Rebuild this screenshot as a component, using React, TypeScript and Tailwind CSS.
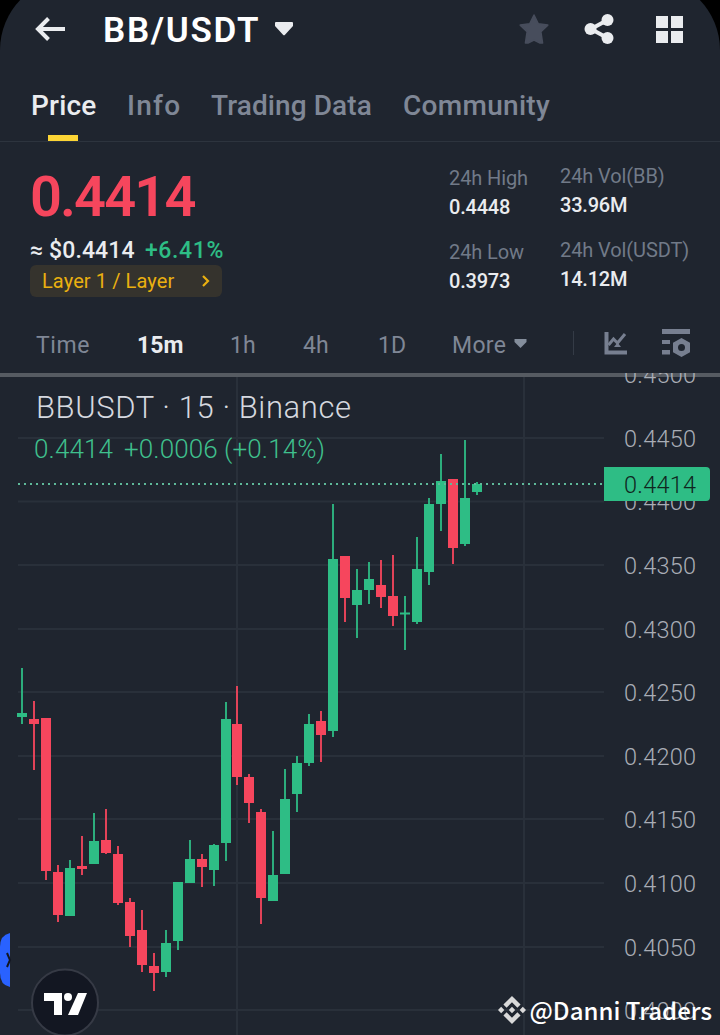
import { SiBinance } from "react-icons/si";

type Candle = {
  x: number;
  high: number;
  top: number;
  bottom: number;
  low: number;
  up: boolean;
};

const UP = "#2ebd85";
const DOWN = "#f6465d";

const c = (
  x: number,
  high: number,
  top: number,
  bottom: number,
  low: number,
  up: boolean
): Candle => ({ x, high, top, bottom, low, up });

const candles: Candle[] = [
  c(22, 668, 713, 717, 724, true),
  c(34, 701, 719, 724, 770, false),
  c(46, 718, 718, 871, 880, false),
  c(58, 865, 872, 915, 922, false),
  c(70, 860, 868, 916, 916, true),
  c(82, 836, 866, 869, 875, false),
  c(94, 813, 841, 864, 864, true),
  c(106, 809, 840, 853, 854, false),
  c(118, 846, 854, 903, 905, false),
  c(130, 898, 902, 936, 947, false),
  c(142, 910, 930, 965, 972, false),
  c(154, 953, 966, 973, 991, false),
  c(166, 930, 943, 972, 977, true),
  c(178, 882, 882, 941, 950, true),
  c(190, 840, 859, 883, 883, true),
  c(202, 854, 859, 867, 887, false),
  c(214, 844, 845, 870, 886, true),
  c(226, 702, 719, 843, 861, true),
  c(237, 686, 724, 777, 785, false),
  c(249, 774, 777, 803, 823, false),
  c(261, 809, 812, 898, 924, false),
  c(273, 831, 875, 901, 901, true),
  c(285, 769, 799, 874, 874, true),
  c(297, 756, 763, 794, 812, true),
  c(309, 714, 724, 763, 766, true),
  c(321, 711, 721, 735, 762, false),
  c(333, 504, 559, 731, 737, true),
  c(345, 556, 556, 598, 622, false),
  c(357, 569, 590, 605, 638, true),
  c(369, 562, 579, 590, 604, true),
  c(381, 560, 585, 597, 608, false),
  c(393, 555, 596, 616, 626, false),
  c(405, 596, 612.5, 614.5, 650, true),
  c(417, 537, 569, 622, 624, true),
  c(429, 498, 504, 572, 585, true),
  c(441, 454, 481, 504, 531, true),
  c(453, 479, 479, 548, 564, false),
  c(465, 440, 498, 544, 546, true),
  c(477, 482, 484, 492, 495, true),
];

const priceLevels = [
  { label: "0.4500", y: 374.5 },
  { label: "0.4450", y: 438 },
  { label: "0.4400", y: 501.5 },
  { label: "0.4350", y: 565 },
  { label: "0.4300", y: 629 },
  { label: "0.4250", y: 692 },
  { label: "0.4200", y: 756 },
  { label: "0.4150", y: 819 },
  { label: "0.4100", y: 883 },
  { label: "0.4050", y: 947 },
  { label: "0.4000", y: 1010 },
];

function Header() {
  return (
    <header className="flex h-[60px] items-center pl-[35px] pr-[37px]">
      <svg width="31" height="26" viewBox="0 0 31 26" className="mb-0.5 shrink-0">
        <path
          d="M30 13H3M13.5 2.5L3 13l10.5 10.5"
          fill="none"
          stroke="#eaecef"
          strokeWidth="4"
        />
      </svg>
      <h1 className="mt-px ml-[37px] w-[155px] whitespace-nowrap text-[35px] leading-none font-semibold tracking-[1.7px] text-white">
        BB/USDT
      </h1>
      <svg width="20" height="16" viewBox="0 0 20 16" className="mb-0.5 ml-4">
        <path
          d="M2 1h16q1.5 0 1 1.800V5L11 13.800q-1 1-2 0L1 5V2.800Q.5 1 2 1z"
          fill="#eaecef"
        />
      </svg>
      <div className="mb-0.5 ml-auto flex items-center">
        <svg width="32" height="32" viewBox="0 0 32 32">
          <path
            d="M16 2l4.300 8.800 9.500 1.300-6.900 6.700 1.700 11.200h-2.600L16 27l-6 3H7.400l1.700-11.200-6.900-6.700 9.500-1.300z"
            fill="#474d5c"
            stroke="#474d5c"
            strokeWidth="1.500"
            strokeLinejoin="round"
          />
        </svg>
        <svg width="30" height="32" viewBox="0 0 30 32" className="ml-[34px]">
          <path
            d="M23.500 7L7 16l16.500 9"
            fill="none"
            stroke="#eaecef"
            strokeWidth="4"
          />
          <g fill="#eaecef">
            <circle cx="6.500" cy="16" r="6" />
            <circle cx="23.500" cy="7" r="6" />
            <circle cx="23.500" cy="25" r="6" />
          </g>
        </svg>
        <div className="ml-[42px] grid grid-cols-2 gap-[3px]">
          <span className="size-3 bg-[#eaecef]" />
          <span className="size-3 bg-[#eaecef]" />
          <span className="size-3 bg-[#eaecef]" />
          <span className="size-3 bg-[#eaecef]" />
        </div>
      </div>
    </header>
  );
}

function Tabs() {
  return (
    <nav className="flex h-[82px] border-b border-[#2d343e] pl-[31px] pt-[26px] text-[28px] leading-10 font-medium whitespace-nowrap text-[#7f8796]">
      <div className="flex w-[96px] flex-col">
        <span className="tracking-[0.2px] text-[#eaecef]">Price</span>
        <span className="mt-[9px] ml-[17px] h-[6px] w-[30px] bg-[#fcd535]" />
      </div>
      <span className="w-[84px] tracking-[1.300px]">Info</span>
      <span className="w-[192px] tracking-[0.1px]">Trading Data</span>
      <span className="tracking-[0.3px]">Community</span>
    </nav>
  );
}

function Stat({ label, value }: { label: string; value: string }) {
  return (
    <div className="h-[74px]">
      <div className="text-[20px] leading-[30px] tracking-[-0.1px] text-[#717a88]">
        {label}
      </div>
      <div className="text-[20px] leading-[28px] font-medium tracking-[-0.2px] text-[#eaecef]">
        {value}
      </div>
    </div>
  );
}

function Summary() {
  return (
    <section className="flex h-[168px] whitespace-nowrap">
      <div className="w-[449px] pl-[30px] pt-[25px]">
        <div className="text-[56px] leading-[60px] font-semibold tracking-[-1.900px] text-[#f6465d]">
          0.4414
        </div>
        <div className="mt-[8px] flex text-[23px] leading-[31px] font-medium">
          <span className="w-[115px] tracking-[0.1px] text-[#eaecef]">
            ≈ $0.4414
          </span>
          <span className="tracking-[0.6px] text-[#2ebd85]">+6.41%</span>
        </div>
        <div className="-mt-px flex h-8 w-[192px] items-center justify-between rounded-md bg-[#35332d] pl-3 pr-[12px] text-[20px] tracking-[0.1px] text-[#eab010]">
          <span>Layer 1 / Layer</span>
          <svg width="8" height="12" viewBox="0 0 8 12">
            <path
              d="M1 1l5 5-5 5"
              fill="none"
              stroke="#eab010"
              strokeWidth="2.200"
            />
          </svg>
        </div>
      </div>
      <div className="w-[111px] pt-[21px]">
        <Stat label="24h High" value="0.4448" />
        <Stat label="24h Low" value="0.3973" />
      </div>
      <div className="pt-[19px]">
        <Stat label="24h Vol(BB)" value="33.96M" />
        <Stat label="24h Vol(USDT)" value="14.12M" />
      </div>
    </section>
  );
}

function Intervals() {
  return (
    <section className="flex h-[63px] items-center pt-[7px] pl-[36px] text-[23px] whitespace-nowrap text-[#7f8796]">
      <span className="mt-[3px] w-[101px] tracking-[0.6px]">Time</span>
      <span className="mt-[3px] w-[93px] font-bold text-[#eaecef]">15m</span>
      <span className="mt-[3px] w-[73px]">1h</span>
      <span className="mt-[3px] w-[75px]">4h</span>
      <span className="mt-[3px] w-[74px]">1D</span>
      <span className="mt-[3px] w-[62px] tracking-[0.3px]">More</span>
      <svg width="13" height="11" viewBox="0 0 13 11" className="mb-1">
        <path d="M.5 1h12v3L6.500 10 .5 4z" fill="#848e9c" />
      </svg>
      <span className="mb-1 ml-[46px] h-6 w-px bg-[#343b46]" />
      <svg width="24" height="24" viewBox="0 0 24 24" className="mb-1 ml-[30px]">
        <g fill="none" stroke="#777f90">
          <path d="M2.500 1v20.500H23" strokeWidth="4" />
          <path d="M4.500 14l5-6 4 4 7.500-9" strokeWidth="3" />
        </g>
        <path d="M10 16l3.500-4.500L17 16z" fill="#777f90" />
      </svg>
      <svg width="28" height="30" viewBox="0 0 28 30" className="mb-1 ml-[34px]">
        <g fill="#777f90">
          <path d="M0 1h28v5H0zM0 12h8v4H0zM0 22h8v4.500H0z" />
          <path
            fillRule="evenodd"
            d="M19.500 10l8.500 4.800v9.400L19.500 29 11 24.200v-9.400zM19.500 16a3.500 3.500 0 1 0 0 7 3.500 3.500 0 0 0 0-7z"
          />
        </g>
      </svg>
    </section>
  );
}

function Chart() {
  // viewBox keeps screen coordinates, so candle values are plain y positions
  return (
    <svg
      width="720"
      height="662"
      viewBox="0 373 720 662"
      className="block font-[Roboto,sans-serif]"
    >
      <g stroke="#29303a" strokeWidth="2">
        {priceLevels.map((p) => (
          <line key={p.label} x1="18" x2="604" y1={p.y} y2={p.y} />
        ))}
        <line x1="237" x2="237" y1="373" y2="1035" />
        <line x1="524" x2="524" y1="373" y2="1035" />
      </g>
      <rect x="0" y="373" width="720" height="4" fill="#565b62" />

      {candles.map((k) => (
        <g key={k.x} fill={k.up ? UP : DOWN}>
          <rect
            x={k.x - 1}
            y={k.high}
            width="2"
            height={k.low - k.high}
            opacity="0.9"
          />
          <rect x={k.x - 5} y={k.top} width="10" height={k.bottom - k.top} />
        </g>
      ))}
      <line
        x1="18"
        x2="604"
        y1="484"
        y2="484"
        stroke="#5fb99a"
        strokeWidth="2"
        strokeDasharray="2 4"
      />

      <g fontSize="23.500" fill="#a9adb6" fontWeight="300">
        {priceLevels.map((p) => (
          <text key={p.label} x="624" y={p.y + 8.500} textLength="72">
            {p.label}
          </text>
        ))}
      </g>
      <path d="M604 467h102q4 0 4 4v26q0 4-4 4H604z" fill={UP} />
      <text
        x="624"
        y="493"
        fontSize="23.500"
        fontWeight="300"
        textLength="72"
        fill="#10271f"
      >
        0.4414
      </text>

      <text
        x="36"
        y="418"
        fontSize="31"
        fontWeight="300"
        textLength="315"
        fill="#d5d8df"
      >
        BBUSDT · 15 · Binance
      </text>
      <g fontSize="26" fontWeight="300" fill="#3fc08d">
        <text x="34" y="458" textLength="79">
          0.4414
        </text>
        <text x="124" y="458" textLength="201">
          +0.0006 (+0.14%)
        </text>
      </g>

      <path d="M10 933Q0 935 0 947v26q0 12 10 14z" fill="#2962ff" />
      <path
        d="M7 953l3 7-3 7"
        fill="none"
        stroke="#131722"
        strokeWidth="2"
      />

      <circle
        cx="65"
        cy="1002.500"
        r="33"
        fill="#131722"
        stroke="#363a45"
        strokeWidth="2"
      />
      <g fill="#fff">
        <path d="M44 993h18v22h-8v-14H44z" />
        <circle cx="68" cy="997" r="4" />
        <path d="M78 993h9l-9 22H68z" />
      </g>
    </svg>
  );
}

export default function App() {
  return (
    <div className="relative h-[1035px] w-[720px] overflow-hidden bg-black font-[Roboto,sans-serif]">
      <div className="-mt-[22px] rounded-t-[72px] bg-[#1f252f] pt-[22px]">
        <Header />
        <Tabs />
        <Summary />
        <Intervals />
        <Chart />
      </div>
      <div className="absolute right-[8px] bottom-[7px] flex h-9 items-center gap-1 font-['Noto_Sans_CJK_SC',sans-serif] text-[24px] font-medium whitespace-nowrap text-white">
        <SiBinance className="size-[28px] text-[#d9d9d9]" />
        <span>@Danni Traders</span>
      </div>
    </div>
  );
}
